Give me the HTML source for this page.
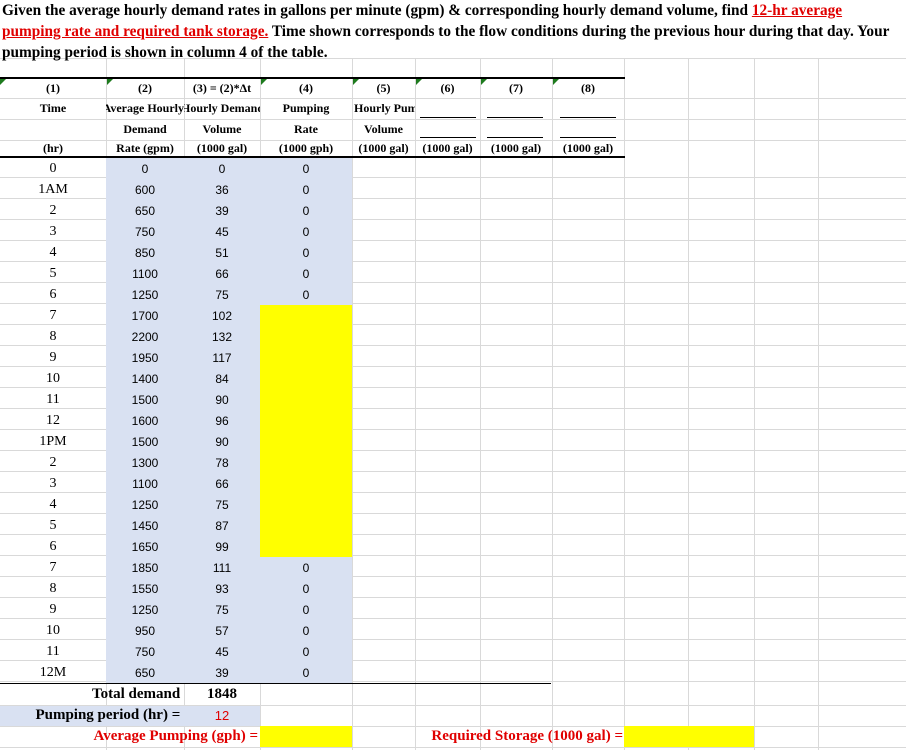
<!DOCTYPE html>
<html><head><meta charset="utf-8"><style>
body{margin:0;width:906px;height:750px;background:#fff;position:relative;overflow:hidden;font-family:"Liberation Serif",serif}
.a{position:absolute}
.v{position:absolute;top:58px;height:692px;width:1px;background:#d9d9d9}
.h{position:absolute;left:0;width:906px;height:1px;background:#d9d9d9}
.title{left:2px;top:0;width:904px;font-weight:bold;font-size:15.3px;line-height:21px;color:#000;white-space:nowrap}
.red{color:#e00000;text-decoration:underline;text-decoration-color:#e00000}
table{border-collapse:collapse;position:absolute;table-layout:fixed}
td{padding:0;text-align:center;white-space:nowrap;overflow:hidden}
.hd td{font-weight:bold;font-size:12px}
.dt td{height:21px;font-size:12px;font-family:"Liberation Sans",sans-serif}
.dt td.t{font-family:"Liberation Serif",serif;font-size:14px;background:transparent}
.b{background:#d9e1f2}.y{background:#ffff00}
.tri{position:absolute;top:79px;width:0;height:0;border-top:6px solid #1e7b1e;border-right:6px solid transparent}
.ul{position:absolute;height:1px;background:#000}
.lb{font-weight:bold;font-size:15px;line-height:21px;text-align:right;white-space:nowrap}
</style></head><body>
<div class="v" style="left:106px"></div><div class="v" style="left:184px"></div><div class="v" style="left:260px"></div><div class="v" style="left:352px"></div><div class="v" style="left:415px"></div><div class="v" style="left:480px"></div><div class="v" style="left:552px"></div><div class="v" style="left:624px"></div><div class="v" style="left:688px"></div><div class="v" style="left:754px"></div><div class="v" style="left:818px"></div>
<div class="h" style="top:58px"></div><div class="h" style="top:98px"></div><div class="h" style="top:119px"></div><div class="h" style="top:140px"></div>
<div class="a" style="left:0;top:157px;width:906px;height:525px;background:repeating-linear-gradient(to bottom,transparent 0,transparent 20px,#d9d9d9 20px,#d9d9d9 21px)"></div>
<div class="h" style="top:705px"></div><div class="h" style="top:726px"></div><div class="h" style="top:747px"></div>

<div class="a title">Given the average hourly demand rates in gallons per minute (gpm) &amp; corresponding hourly demand volume, find <span class="red">12-hr average </span><br><span class="red">pumping rate and required tank storage.</span> Time shown corresponds to the flow conditions during the previous hour during that day. Your<br>pumping period is shown in column 4 of the table.</div>

<div class="a" style="left:0;top:77px;width:625px;height:2px;background:#000"></div>
<div class="tri" style="left:0"></div><div class="tri" style="left:107px"></div><div class="tri" style="left:261px"></div><div class="tri" style="left:353px"></div><div class="tri" style="left:416px"></div><div class="tri" style="left:481px"></div><div class="tri" style="left:553px"></div>

<table class="hd" style="left:0;top:79px;width:624px">
<colgroup><col style="width:106px"><col style="width:78px"><col style="width:76px"><col style="width:92px"><col style="width:63px"><col style="width:65px"><col style="width:72px"><col style="width:72px"></colgroup>
<tr style="height:19px"><td>(1)</td><td>(2)</td><td>(3) = (2)*Δt</td><td>(4)</td><td>(5)</td><td>(6)</td><td>(7)</td><td>(8)</td></tr>
<tr style="height:21px"><td>Time</td><td style="text-align:right;direction:rtl">Average Hourly</td><td style="text-align:left;text-indent:-3px">Hourly Demand</td><td>Pumping</td><td style="text-align:left;text-indent:2px">Hourly Pum</td><td></td><td></td><td></td></tr>
<tr style="height:21px"><td></td><td>Demand</td><td>Volume</td><td>Rate</td><td>Volume</td><td></td><td></td><td></td></tr>
<tr style="height:17px"><td>(hr)</td><td>Rate (gpm)</td><td>(1000 gal)</td><td>(1000 gph)</td><td>(1000 gal)</td><td>(1000 gal)</td><td>(1000 gal)</td><td>(1000 gal)</td></tr>
</table>
<div class="ul" style="left:420px;top:117px;width:56px"></div><div class="ul" style="left:487px;top:117px;width:56px"></div><div class="ul" style="left:560px;top:117px;width:56px"></div>
<div class="ul" style="left:420px;top:137px;width:56px"></div><div class="ul" style="left:487px;top:137px;width:56px"></div><div class="ul" style="left:560px;top:137px;width:56px"></div>
<div class="a" style="left:0;top:156px;width:625px;height:2px;background:#000"></div>

<table class="dt" style="left:0;top:158px;width:352px">
<colgroup><col style="width:106px"><col style="width:78px"><col style="width:76px"><col style="width:92px"></colgroup>
<tr><td class="t">0</td><td class="b">0</td><td class="b">0</td><td class="b">0</td></tr>
<tr><td class="t">1AM</td><td class="b">600</td><td class="b">36</td><td class="b">0</td></tr>
<tr><td class="t">2</td><td class="b">650</td><td class="b">39</td><td class="b">0</td></tr>
<tr><td class="t">3</td><td class="b">750</td><td class="b">45</td><td class="b">0</td></tr>
<tr><td class="t">4</td><td class="b">850</td><td class="b">51</td><td class="b">0</td></tr>
<tr><td class="t">5</td><td class="b">1100</td><td class="b">66</td><td class="b">0</td></tr>
<tr><td class="t">6</td><td class="b">1250</td><td class="b">75</td><td class="b">0</td></tr>
<tr><td class="t">7</td><td class="b">1700</td><td class="b">102</td><td class="y"></td></tr>
<tr><td class="t">8</td><td class="b">2200</td><td class="b">132</td><td class="y"></td></tr>
<tr><td class="t">9</td><td class="b">1950</td><td class="b">117</td><td class="y"></td></tr>
<tr><td class="t">10</td><td class="b">1400</td><td class="b">84</td><td class="y"></td></tr>
<tr><td class="t">11</td><td class="b">1500</td><td class="b">90</td><td class="y"></td></tr>
<tr><td class="t">12</td><td class="b">1600</td><td class="b">96</td><td class="y"></td></tr>
<tr><td class="t">1PM</td><td class="b">1500</td><td class="b">90</td><td class="y"></td></tr>
<tr><td class="t">2</td><td class="b">1300</td><td class="b">78</td><td class="y"></td></tr>
<tr><td class="t">3</td><td class="b">1100</td><td class="b">66</td><td class="y"></td></tr>
<tr><td class="t">4</td><td class="b">1250</td><td class="b">75</td><td class="y"></td></tr>
<tr><td class="t">5</td><td class="b">1450</td><td class="b">87</td><td class="y"></td></tr>
<tr><td class="t">6</td><td class="b">1650</td><td class="b">99</td><td class="y"></td></tr>
<tr><td class="t">7</td><td class="b">1850</td><td class="b">111</td><td class="b">0</td></tr>
<tr><td class="t">8</td><td class="b">1550</td><td class="b">93</td><td class="b">0</td></tr>
<tr><td class="t">9</td><td class="b">1250</td><td class="b">75</td><td class="b">0</td></tr>
<tr><td class="t">10</td><td class="b">950</td><td class="b">57</td><td class="b">0</td></tr>
<tr><td class="t">11</td><td class="b">750</td><td class="b">45</td><td class="b">0</td></tr>
<tr><td class="t">12M</td><td class="b">650</td><td class="b">39</td><td class="b">0</td></tr>
</table>
<div class="a" style="left:0;top:683px;width:551px;height:1px;background:#000"></div>

<div class="a lb" style="left:0;top:684px;width:184px;height:21px">Total demand&nbsp;</div>
<div class="a" style="left:184px;top:684px;width:76px;height:21px;line-height:21px;text-align:center;font-weight:bold;font-size:15px">1848</div>
<div class="a" style="left:0;top:706px;width:260px;height:20px;background:#d9e1f2"></div>
<div class="a lb" style="left:0;top:705px;width:184px;height:21px">Pumping period (hr) =&nbsp;</div>
<div class="a" style="left:184px;top:705px;width:76px;height:21px;line-height:21px;text-align:center;font-family:'Liberation Sans',sans-serif;font-size:13px;color:#e00000">12</div>
<div class="a lb" style="left:0;top:726px;width:258px;height:21px;color:#e00000">Average Pumping (gph) =</div>
<div class="a" style="left:260px;top:726px;width:92px;height:21px;background:#ffff00"></div>
<div class="a lb" style="left:352px;top:726px;width:271px;height:21px;color:#e00000">Required Storage (1000 gal) =</div>
<div class="a" style="left:624px;top:726px;width:130px;height:21px;background:#ffff00"></div>
</body></html>
